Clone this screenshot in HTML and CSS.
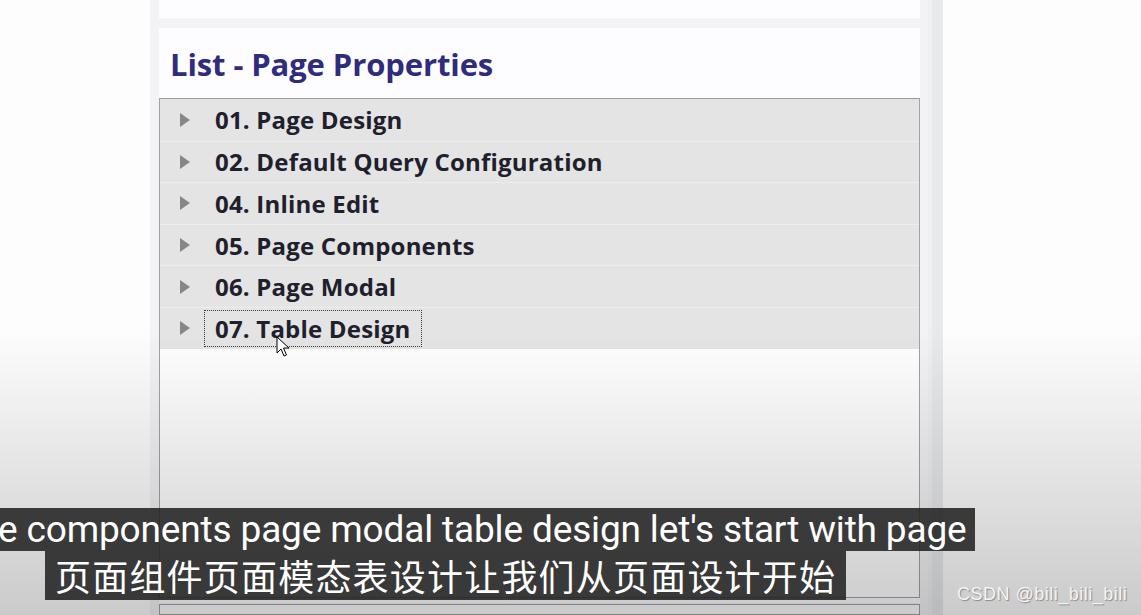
FILE: index.html
```html
<!DOCTYPE html>
<html lang="en">
<head>
<meta charset="utf-8">
<title>List - Page Properties</title>
<link rel="stylesheet" href="styles.css">
</head>
<body>
<div class="screen">
  <div class="gutter"></div>
  <div class="column">
    <div class="card card-top"></div>
    <div class="card card-main">
      <h1 class="title">List - Page Properties</h1>
      <div class="tree">
        <div class="row"><span class="caret"></span><span class="label">01. Page Design</span></div>
        <div class="row"><span class="caret"></span><span class="label">02. Default Query Configuration</span></div>
        <div class="row"><span class="caret"></span><span class="label">04. Inline Edit</span></div>
        <div class="row"><span class="caret"></span><span class="label">05. Page Components</span></div>
        <div class="row"><span class="caret"></span><span class="label">06. Page Modal</span></div>
        <div class="row"><span class="caret"></span><span class="label focused">07. Table Design</span></div>
      </div>
    </div>
    <div class="card-next"></div>
  </div>
  <div class="scrollstrip"></div>
  <div class="rightpane"></div>

  <div class="shade"></div>

  <svg class="cursor" width="14" height="22" viewBox="0 0 14 22">
    <path d="M1 1 L1 17 L5 13 L8 20 L10.5 19 L7.5 12 L13 12 Z" fill="#fff" stroke="#000" stroke-width="1" stroke-linejoin="round"/>
  </svg>

  <div class="subs">
    <div class="sub sub-en">e components page modal table design let's start with page</div>
    <div class="sub sub-zh">页面组件页面模态表设计让我们从页面设计开始</div>
  </div>
  <div class="watermark">CSDN @bili_bili_bili</div>
</div>
</body>
</html>
```

FILE: styles.css
```css
* { box-sizing: border-box; }
html, body { margin: 0; padding: 0; }
body { background: #fdfdfe; overflow: hidden; }

.screen {
  position: relative;
  width: 1141px;
  height: 615px;
  display: flex;
  background: #fdfdfe;
  overflow: hidden;
}

.gutter { width: 150px; flex: none; background: #fdfdfe; }

.column {
  width: 778px;
  flex: none;
  background: #f3f3f6;
  padding: 0 8px 0 9px;
  display: flex;
  flex-direction: column;
}

.card { background: #fdfdff; }
.card-top { height: 18px; flex: none; }

.card-main {
  margin-top: 10px;
  display: flex;
  flex-direction: column;
  padding-bottom: 5px;
}

.title {
  margin: 0;
  height: 70px;
  padding: 16px 0 0 11px;
  font-family: "Open Sans", Lato, sans-serif;
  font-weight: 700;
  font-size: 31px;
  line-height: 40px;
  color: #2f2b7d;
  letter-spacing: -0.1px;
}

.tree {
  height: 500px;
  border: 1px solid #a2a2a4;
  border-top-color: #9c9c9e;
  background: #ffffff;
}

.row {
  height: 41.6px;
  display: flex;
  align-items: center;
  background: #e4e4e4;
  border-top: 1px solid #ededed;
  padding-left: 20px;
}
.row:first-child { border-top: none; }

.caret {
  width: 0;
  height: 0;
  border-top: 7px solid transparent;
  border-bottom: 7px solid transparent;
  border-left: 10px solid #878787;
  margin-right: 14px;
}

.label {
  font-family: "Open Sans", Lato, sans-serif;
  font-weight: 700;
  font-size: 24px;
  line-height: 35px;
  color: #20202c;
  padding: 0 10px;
  border: 1px dotted transparent;
  letter-spacing: 0.2px;
}
.label.focused { border-color: #3a3a3a; }

.card-next {
  margin-top: 1px;
  flex: 1;
  border: 1px solid #a2a2a4;
  background: #fdfdff;
}

.scrollstrip {
  width: 15px;
  flex: none;
  background: linear-gradient(to right, #f0f0f3 0, #f0f0f3 4px, #e8e9ed 4px);
}

.rightpane { flex: 1; background: #fdfdfe; }

.shade {
  position: absolute;
  inset: 0;
  pointer-events: none;
  background: linear-gradient(to bottom, rgba(0,0,0,0) 0, rgba(0,0,0,0) 330px, rgba(0,0,0,0.2) 615px);
}

.cursor {
  position: absolute;
  left: 276px;
  top: 336px;
}

.subs {
  position: absolute;
  left: 0;
  top: 508px;
  display: flex;
  flex-direction: column;
  align-items: flex-start;
}

.sub {
  background: rgba(35, 35, 35, 0.88);
  color: #ffffff;
  white-space: nowrap;
}

.sub-en {
  font-family: Roboto, "Liberation Sans", sans-serif;
  font-size: 37px;
  height: 43px;
  line-height: 43px;
  padding: 0 8px 0 0;
  margin-left: -2px;
  letter-spacing: -0.15px;
}

.sub-zh {
  margin-left: 45px;
  font-family: "Noto Sans CJK SC", sans-serif;
  font-size: 36px;
  height: 49px;
  line-height: 49px;
  padding: 0 10px;
  letter-spacing: 1.2px;
}

.watermark {
  position: absolute;
  left: 957px;
  top: 584px;
  font-family: "Liberation Sans", Arial, sans-serif;
  font-size: 18px;
  color: #f4f4f4;
  text-shadow: 1px 1px 1px #8a8a8a;
  letter-spacing: 0.5px;
}
```
